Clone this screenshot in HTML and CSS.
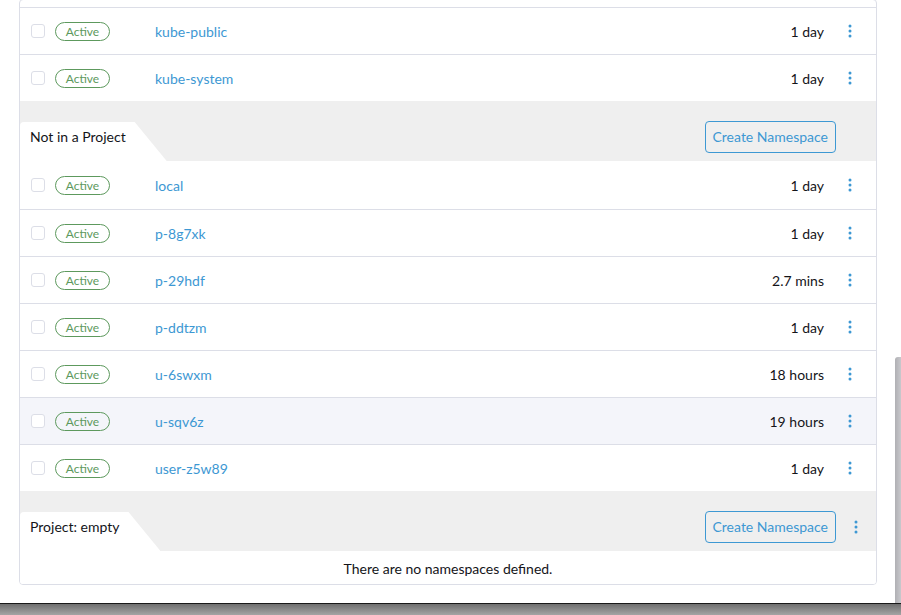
FILE: index.html
```html
<!DOCTYPE html>
<html lang="en">
<head>
<meta charset="utf-8">
<title>Namespaces</title>
<link rel="stylesheet" href="styles.css">
</head>
<body>
<div class="page">
  <div class="card">
    <div class="row-stub"></div>
    <div class="row sep">
      <span class="cell-check"><span class="checkbox"></span></span>
      <span class="cell-state"><span class="badge">Active</span></span>
      <a class="cell-name">kube-public</a>
      <span class="cell-age">1 day</span>
      <span class="cell-menu"><svg class="kebab" viewBox="0 0 4 14" width="4" height="14"><circle cx="2" cy="2" r="1.5"/><circle cx="2" cy="7" r="1.5"/><circle cx="2" cy="12" r="1.5"/></svg></span>
    </div>
    <div class="row sep">
      <span class="cell-check"><span class="checkbox"></span></span>
      <span class="cell-state"><span class="badge">Active</span></span>
      <a class="cell-name">kube-system</a>
      <span class="cell-age">1 day</span>
      <span class="cell-menu"><svg class="kebab" viewBox="0 0 4 14" width="4" height="14"><circle cx="2" cy="2" r="1.5"/><circle cx="2" cy="7" r="1.5"/><circle cx="2" cy="12" r="1.5"/></svg></span>
    </div>

    <div class="group-head">
      <span class="tab">Not in a Project</span>
      <span class="spacer"></span>
      <button class="btn">Create Namespace</button>
      <span class="head-menu hidden"><svg class="kebab" viewBox="0 0 4 14" width="4" height="14"><circle cx="2" cy="2" r="1.5"/><circle cx="2" cy="7" r="1.5"/><circle cx="2" cy="12" r="1.5"/></svg></span>
    </div>

    <div class="row first">
      <span class="cell-check"><span class="checkbox"></span></span>
      <span class="cell-state"><span class="badge">Active</span></span>
      <a class="cell-name">local</a>
      <span class="cell-age">1 day</span>
      <span class="cell-menu"><svg class="kebab" viewBox="0 0 4 14" width="4" height="14"><circle cx="2" cy="2" r="1.5"/><circle cx="2" cy="7" r="1.5"/><circle cx="2" cy="12" r="1.5"/></svg></span>
    </div>
    <div class="row sep">
      <span class="cell-check"><span class="checkbox"></span></span>
      <span class="cell-state"><span class="badge">Active</span></span>
      <a class="cell-name">p-8g7xk</a>
      <span class="cell-age">1 day</span>
      <span class="cell-menu"><svg class="kebab" viewBox="0 0 4 14" width="4" height="14"><circle cx="2" cy="2" r="1.5"/><circle cx="2" cy="7" r="1.5"/><circle cx="2" cy="12" r="1.5"/></svg></span>
    </div>
    <div class="row sep">
      <span class="cell-check"><span class="checkbox"></span></span>
      <span class="cell-state"><span class="badge">Active</span></span>
      <a class="cell-name">p-29hdf</a>
      <span class="cell-age">2.7 mins</span>
      <span class="cell-menu"><svg class="kebab" viewBox="0 0 4 14" width="4" height="14"><circle cx="2" cy="2" r="1.5"/><circle cx="2" cy="7" r="1.5"/><circle cx="2" cy="12" r="1.5"/></svg></span>
    </div>
    <div class="row sep">
      <span class="cell-check"><span class="checkbox"></span></span>
      <span class="cell-state"><span class="badge">Active</span></span>
      <a class="cell-name">p-ddtzm</a>
      <span class="cell-age">1 day</span>
      <span class="cell-menu"><svg class="kebab" viewBox="0 0 4 14" width="4" height="14"><circle cx="2" cy="2" r="1.5"/><circle cx="2" cy="7" r="1.5"/><circle cx="2" cy="12" r="1.5"/></svg></span>
    </div>
    <div class="row sep">
      <span class="cell-check"><span class="checkbox"></span></span>
      <span class="cell-state"><span class="badge">Active</span></span>
      <a class="cell-name">u-6swxm</a>
      <span class="cell-age">18 hours</span>
      <span class="cell-menu"><svg class="kebab" viewBox="0 0 4 14" width="4" height="14"><circle cx="2" cy="2" r="1.5"/><circle cx="2" cy="7" r="1.5"/><circle cx="2" cy="12" r="1.5"/></svg></span>
    </div>
    <div class="row sep hover">
      <span class="cell-check"><span class="checkbox"></span></span>
      <span class="cell-state"><span class="badge">Active</span></span>
      <a class="cell-name">u-sqv6z</a>
      <span class="cell-age">19 hours</span>
      <span class="cell-menu"><svg class="kebab" viewBox="0 0 4 14" width="4" height="14"><circle cx="2" cy="2" r="1.5"/><circle cx="2" cy="7" r="1.5"/><circle cx="2" cy="12" r="1.5"/></svg></span>
    </div>
    <div class="row sep">
      <span class="cell-check"><span class="checkbox"></span></span>
      <span class="cell-state"><span class="badge">Active</span></span>
      <a class="cell-name">user-z5w89</a>
      <span class="cell-age">1 day</span>
      <span class="cell-menu"><svg class="kebab" viewBox="0 0 4 14" width="4" height="14"><circle cx="2" cy="2" r="1.5"/><circle cx="2" cy="7" r="1.5"/><circle cx="2" cy="12" r="1.5"/></svg></span>
    </div>

    <div class="group-head">
      <span class="tab">Project: empty</span>
      <span class="spacer"></span>
      <button class="btn">Create Namespace</button>
      <span class="head-menu"><svg class="kebab" viewBox="0 0 4 14" width="4" height="14"><circle cx="2" cy="2" r="1.5"/><circle cx="2" cy="7" r="1.5"/><circle cx="2" cy="12" r="1.5"/></svg></span>
    </div>
    <div class="empty">There are no namespaces defined.</div>
  </div>
</div>
<div class="side-shadow"></div>
<div class="bottom-bar"></div>
</body>
</html>
```

FILE: styles.css
```css
html, body {
  margin: 0;
  padding: 0;
  height: 615px;
  overflow: hidden;
  background: #ffffff;
}
body {
  font-family: Lato, "Liberation Sans", sans-serif;
  font-size: 14px;
  color: #141419;
  position: relative;
}
.page {
  height: 604px;
  padding-left: 19px;
  overflow: hidden;
}
.card {
  width: 856px;
  margin-top: -1px;
  border: 1px solid #dcdee7;
  border-radius: 4px;
  background: #fff;
  overflow: hidden;
}
.row-stub {
  height: 7px;
}
.row {
  display: flex;
  align-items: center;
  height: 46px;
  background: #fff;
}
.row.first {
  height: 48px;
  padding-bottom: 0;
}
.row.sep {
  border-top: 1px solid #dcdee7;
}
.row.hover {
  background: #f4f5fa;
}
.cell-check {
  width: 24px;
  padding-left: 11px;
  display: flex;
  align-items: center;
}
.checkbox {
  width: 12px;
  height: 12px;
  border: 1px solid #dcdee7;
  border-radius: 3px;
  background: #fff;
}
.cell-state {
  width: 100px;
  display: flex;
  align-items: center;
}
.badge {
  display: inline-block;
  box-sizing: border-box;
  width: 55px;
  height: 19px;
  line-height: 17px;
  border: 1px solid #5d995d;
  border-radius: 10px;
  color: #5d995d;
  font-size: 12px;
  text-align: center;
}
.cell-name {
  flex: 1;
  color: #3d98d3;
  text-decoration: none;
}
.cell-age {
  text-align: right;
}
.cell-menu {
  width: 52px;
  display: flex;
  justify-content: center;
  align-items: center;
}
.kebab {
  fill: #3d98d3;
  display: block;
}
.group-head {
  display: flex;
  align-items: flex-end;
  height: 60px;
  background: #efefef;
}
.tab {
  box-sizing: border-box;
  height: 39px;
  padding: 6px 41px 0 10px;
  line-height: 18px;
  background: #fff;
  border-top-left-radius: 4px;
  clip-path: polygon(0 0, calc(100% - 32px) 0, 100% 100%, 0 100%);
  color: #141419;
}
.spacer {
  flex: 1;
}
.btn {
  align-self: center;
  margin-top: 11px;
  height: 32px;
  padding: 0 7px;
  font-family: Lato, "Liberation Sans", sans-serif;
  font-size: 14px;
  color: #3d98d3;
  background: transparent;
  border: 1px solid #3d98d3;
  border-radius: 4px;
}
.head-menu {
  align-self: center;
  margin-top: 11px;
  width: 40px;
  display: flex;
  justify-content: center;
}
.head-menu.hidden {
  visibility: hidden;
}
.empty {
  height: 33px;
  line-height: 35px;
  text-align: center;
  background: #fff;
}
.side-shadow {
  position: absolute;
  right: 0;
  top: 357px;
  width: 6px;
  height: 247px;
  background: linear-gradient(to right, #b0b0b4, #c8c8cc);
  border-top-left-radius: 3px;
}
.bottom-bar {
  position: absolute;
  left: 0;
  right: 0;
  top: 603px;
  height: 12px;
  border-top: 1px solid #1a1a1a;
  background: linear-gradient(to bottom, #6f6f6f, #a9a9a9);
}
```
